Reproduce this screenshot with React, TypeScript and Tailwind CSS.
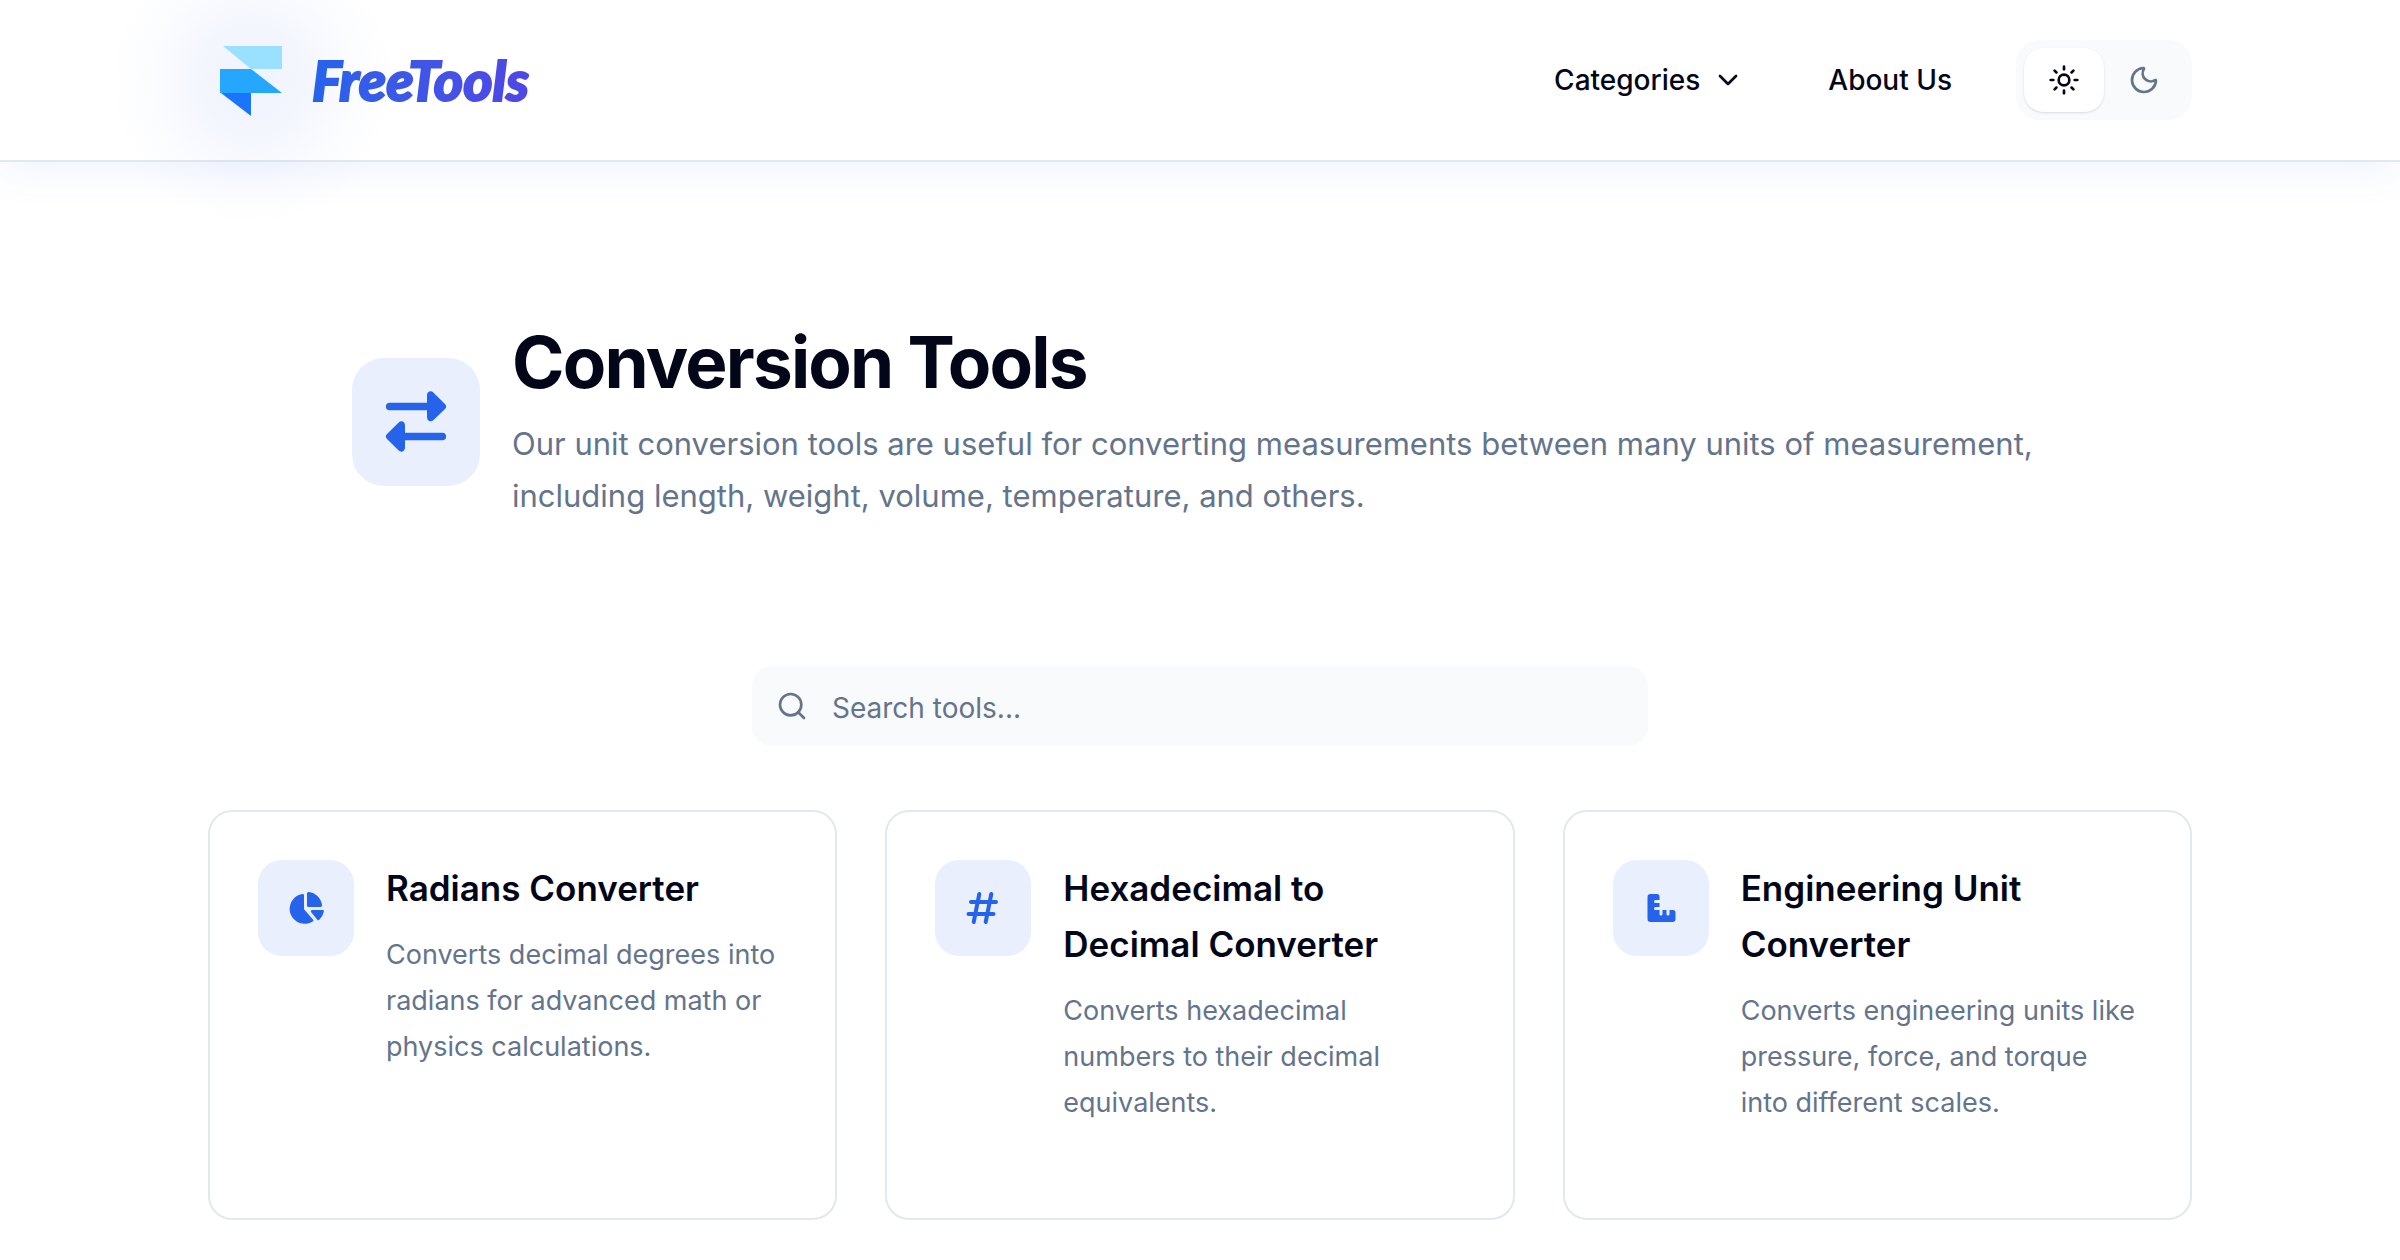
import { useState } from 'react';
import { ChevronDown, Moon, Search, Sun } from 'lucide-react';

const tools = [
  {
    name: 'Radians Converter',
    description: 'Converts decimal degrees into radians for advanced math or physics calculations.',
    icon: PieIcon,
  },
  {
    name: 'Hexadecimal to Decimal Converter',
    description: 'Converts hexadecimal numbers to their decimal equivalents.',
    icon: HashIcon,
  },
  {
    name: 'Engineering Unit Converter',
    description: 'Converts engineering units like pressure, force, and torque into different scales.',
    icon: RulerIcon,
  },
];

function LogoMark() {
  return (
    <svg viewBox="0 0 64 72" className="relative h-[72px] w-16" aria-hidden="true">
      <path d="M3 2H62V25H31Z" fill="#99e1ff" />
      <path d="M0 25H31L62 49H0Z" fill="#25a7fd" />
      <path d="M1 49H31V72Z" fill="#1a75fd" />
    </svg>
  );
}

function TransferIcon() {
  return (
    <svg viewBox="0 0 64 64" className="size-16" fill="currentColor" aria-hidden="true">
      <path d="M5.700 12.700H43V5a3.700 3.700 0 0 1 6.300-2.600L61 14a3.600 3.600 0 0 1 0 5L49.300 30.200A3.700 3.700 0 0 1 43 27.600V20.300H5.700a3.800 3.800 0 0 1 0-7.600Z" />
      <path d="M58.300 42.700H21V35a3.700 3.700 0 0 0-6.300-2.600L3 44a3.600 3.600 0 0 0 0 5L14.700 60.600A3.700 3.700 0 0 0 21 58V50.300H58.300a3.800 3.800 0 0 0 0-7.600Z" />
    </svg>
  );
}

function PieIcon() {
  return (
    <svg viewBox="0 0 36 36" className="size-9" fill="currentColor" aria-hidden="true">
      <path d="M16 5.500V19.300L25 29.500a1.300 1.300 0 0 1-.3 2A15 15 0 1 1 14.500 4A1.400 1.400 0 0 1 16 5.500Z" />
      <path d="M19 3.500A1.500 1.500 0 0 1 20.700 2A15 15 0 0 1 34 15.300A1.500 1.500 0 0 1 32.500 17H20.500A1.500 1.500 0 0 1 19 15.500Z" />
      <path d="M24.200 20H34.500a1.300 1.300 0 0 1 1.300 1.700A15 15 0 0 1 31.300 29.800a1.400 1.400 0 0 1-2-.1L23.200 22.200A1.300 1.300 0 0 1 24.200 20Z" />
    </svg>
  );
}

function HashIcon() {
  return (
    <svg viewBox="0 0 36 36" className="size-9" fill="none" stroke="currentColor" strokeWidth="4" strokeLinecap="round" aria-hidden="true">
      <path d="M6 12H31M3.500 24H28.500M14.300 4L8.700 32M26.300 4L20.700 32" />
    </svg>
  );
}

function RulerIcon() {
  return (
    <svg viewBox="0 0 36 36" className="size-9" fill="currentColor" aria-hidden="true">
      <path d="M7.500 4H14a2.500 2.500 0 0 1 2.500 2.500V10H12.500a1.500 1.500 0 0 0 0 3H16.500V17H12.500a1.500 1.500 0 0 0 0 3H16.500V24a1.500 1.500 0 0 0 3 0V20H23.500V24a1.500 1.500 0 0 0 3 0V20H30a2.500 2.500 0 0 1 2.500 2.500V29a3 3 0 0 1-3 3H7.500a3 3 0 0 1-3-3V7a3 3 0 0 1 3-3Z" />
    </svg>
  );
}

function ThemeSwitch() {
  const [dark, setDark] = useState(false);
  const base = 'flex h-16 w-20 items-center justify-center rounded-[20px]';

  return (
    <div className="flex rounded-3xl bg-slate-50 p-2">
      <button
        type="button"
        aria-label="Light theme"
        aria-pressed={!dark}
        onClick={() => setDark(false)}
        className={`${base} ${dark ? 'text-[#64748b]' : 'bg-white text-slate-950 shadow-sm'}`}
      >
        <Sun className="size-8" />
      </button>
      <button
        type="button"
        aria-label="Dark theme"
        aria-pressed={dark}
        onClick={() => setDark(true)}
        className={`${base} ${dark ? 'bg-white text-slate-950 shadow-sm' : 'text-[#64748b]'}`}
      >
        <Moon className="size-8" />
      </button>
    </div>
  );
}

function Header() {
  return (
    <header className="border-b-2 border-slate-200 shadow-[0_8px_40px_rgba(37,99,235,0.08)]">
      <div className="mx-auto flex h-40 max-w-[2048px] items-center justify-between px-8">
        <a href="#" className="flex items-center gap-7 pl-3">
          <span className="relative">
            {/* Soft glow behind the mark */}
            <span className="absolute -inset-28 rounded-full bg-[radial-gradient(closest-side,rgba(59,99,235,0.08),rgba(59,99,235,0.06)_35%,rgba(59,99,235,0.02)_70%,transparent)]" />
            <LogoMark />
          </span>
          <span className="relative bg-linear-to-r from-[#2563eb] to-[#4f46e5] bg-clip-text font-[Lato,sans-serif] text-[56px] leading-16 font-black text-transparent italic [-webkit-text-stroke:2px_transparent]">
            FreeTools
          </span>
        </a>
        <nav className="flex items-center text-[28px] font-medium">
          <button type="button" className="flex items-center gap-3">
            Categories
            <ChevronDown className="size-8" />
          </button>
          <a href="#" className="mr-16 ml-21">
            About Us
          </a>
          <ThemeSwitch />
        </nav>
      </div>
    </header>
  );
}

export default function App() {
  const [query, setQuery] = useState('');
  const visible = tools.filter((tool) => tool.name.toLowerCase().includes(query.toLowerCase()));

  return (
    <div className="min-h-screen bg-white font-[Inter,sans-serif] text-slate-950">
      <Header />

      <main className="mx-auto max-w-[2048px] px-8 pt-40 pb-10">
        {/* Category intro */}
        <section className="mx-auto flex max-w-[1696px] items-center gap-8">
          <div className="flex size-32 shrink-0 items-center justify-center rounded-[32px] bg-[#e9effd] text-[#2563eb]">
            <TransferIcon />
          </div>
          <div>
            <h1 className="mb-4 text-[71px] leading-20 font-bold tracking-tight">Conversion Tools</h1>
            <p className="text-[31px] leading-[52px] text-[#64748b]">
              Our unit conversion tools are useful for converting measurements between many units of
              measurement, including length, weight, volume, temperature, and others.
            </p>
          </div>
        </section>

        {/* Search */}
        <div className="relative mx-auto mt-36 max-w-4xl">
          <Search className="pointer-events-none absolute top-6 left-6 size-8 text-[#64748b]" />
          <input
            type="text"
            aria-label="Search tools"
            placeholder="Search tools..."
            value={query}
            onChange={(e) => setQuery(e.target.value)}
            className="h-20 w-full rounded-[20px] bg-slate-50 pt-1 pr-6 pl-20 text-[28px] outline-none placeholder:text-[#64748b]"
          />
        </div>

        {/* Tools */}
        <div className="mt-16 grid grid-cols-3 gap-12">
          {visible.map(({ name, description, icon: Icon }) => (
            <a key={name} href="#" className="flex min-h-[410px] gap-8 rounded-3xl border-2 border-slate-200 p-12">
              <div className="flex size-24 shrink-0 items-center justify-center rounded-3xl bg-[#e9effd] text-[#2563eb]">
                <Icon />
              </div>
              <div>
                <h2 className="mb-4 text-[35px] leading-14 font-semibold">{name}</h2>
                <p className="text-[27px] leading-[46px] text-[#64748b]">{description}</p>
              </div>
            </a>
          ))}
        </div>
      </main>
    </div>
  );
}
